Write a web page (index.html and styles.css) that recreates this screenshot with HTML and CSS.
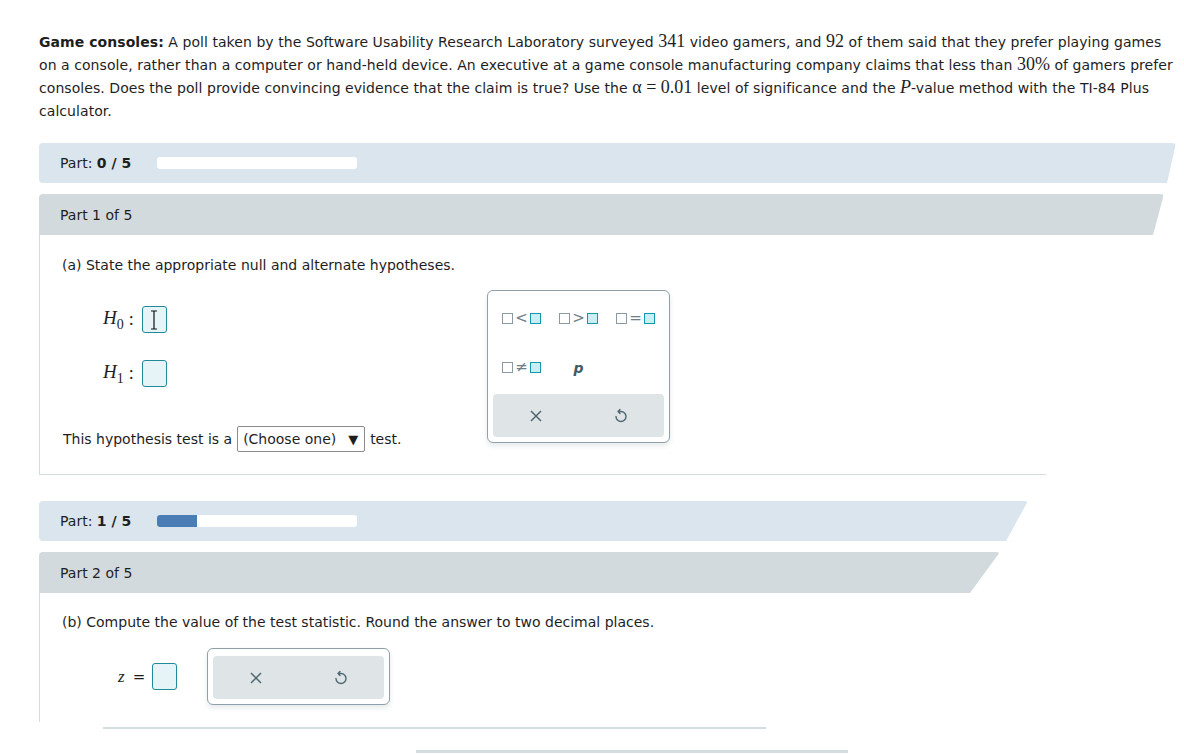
FILE: index.html
```html
<!DOCTYPE html>
<html lang="en">
  <head>
    <meta charset="UTF-8" />
    <meta name="viewport" content="width=device-width, initial-scale=1.0" />
    <title>Hypothesis test for a proportion</title>
    <link rel="stylesheet" href="styles.css">
  </head>
  <body>
    <main class="page">
      <p class="problem">
        <b>Game consoles:</b> A poll taken by the Software Usability Research Laboratory surveyed <span class="math">341</span> video gamers, and <span class="math">92</span> of them said that they prefer playing games on a console, rather than a computer or hand-held device. An executive at a game console manufacturing company claims that less than <span class="math">30%</span> of gamers prefer consoles. Does the poll provide convincing evidence that the claim is true? Use the <span class="math">α = 0.01</span> level of significance and the <span class="math"><i>P</i></span>-value method with the TI-84 Plus calculator.
      </p>

      <div class="progress progress--first">
        <span class="progress-label">Part: <b>0 / 5</b></span>
        <div class="track"><div class="fill" style="width: 0%"></div></div>
      </div>
      <div class="part-head part-head--first">Part 1 of 5</div>
      <section class="part-body part-body--a">
        <p class="question">(a) State the appropriate null and alternate hypotheses.</p>
        <div class="answer">
          <div class="answer-main">
            <div class="hyp">
              <span class="var">H<sub>0</sub></span><span class="colon">:</span>
              <span class="box">
                <svg class="ibeam" width="8" height="20" viewBox="0 0 8 20">
                  <path d="M1 1h6M1 19h6M4 1v18" stroke="#111" stroke-width="1.2" fill="none" />
                </svg>
              </span>
            </div>
            <div class="hyp">
              <span class="var">H<sub>1</sub></span><span class="colon">:</span>
              <span class="box"></span>
            </div>
            <div class="sentence">
              <span>This hypothesis test is a</span>
              <span class="select"><span>(Choose one)</span><span class="caret">▼</span></span>
              <span>test.</span>
            </div>
          </div>

          <div class="keypad">
            <div class="keys">
              <span class="key"><i class="sq"></i><span class="op">&lt;</span><i class="sq sq--on"></i></span>
              <span class="key"><i class="sq"></i><span class="op">&gt;</span><i class="sq sq--on"></i></span>
              <span class="key"><i class="sq"></i><span class="op">=</span><i class="sq sq--on"></i></span>
              <span class="key"><i class="sq"></i><span class="op">≠</span><i class="sq sq--on"></i></span>
              <span class="key key--p">p</span>
            </div>
            <div class="tools">
              <svg width="14" height="14" viewBox="0 0 14 14">
                <path d="M2 2l10 10M12 2L2 12" stroke="#4f6771" stroke-width="1.5" fill="none" />
              </svg>
              <svg width="14" height="16" viewBox="0 0 14 16">
                <path d="M6 1.5L4 3.5l2 2M4 3.5h3a5 5 0 1 1-5 5" stroke="#4f6771" stroke-width="1.4" fill="none" stroke-linecap="round" stroke-linejoin="round" />
              </svg>
            </div>
          </div>
        </div>
      </section>

      <div class="progress progress--second">
        <span class="progress-label">Part: <b>1 / 5</b></span>
        <div class="track"><div class="fill" style="width: 20%"></div></div>
      </div>
      <div class="part-head part-head--second">Part 2 of 5</div>
      <section class="part-body part-body--b">
        <p class="question">(b) Compute the value of the test statistic. Round the answer to two decimal places.</p>
        <div class="zrow">
          <span class="var var--z">z</span><span class="eq">=</span>
          <span class="box"></span>
          <div class="keypad keypad--small">
            <div class="tools">
              <svg width="14" height="14" viewBox="0 0 14 14">
                <path d="M2 2l10 10M12 2L2 12" stroke="#4f6771" stroke-width="1.5" fill="none" />
              </svg>
              <svg width="14" height="16" viewBox="0 0 14 16">
                <path d="M6 1.5L4 3.5l2 2M4 3.5h3a5 5 0 1 1-5 5" stroke="#4f6771" stroke-width="1.4" fill="none" stroke-linecap="round" stroke-linejoin="round" />
              </svg>
            </div>
          </div>
        </div>
      </section>
      <div class="rule"></div>
      <div class="rule rule--faint"></div>
    </main>
  </body>
</html>
```

FILE: styles.css
```css
:root {
  --progress-bg: #dae5ee;
  --head-bg: #d2dadd;
  --line: #d3dcdf;
  --teal: #1f8b99;
  --slate: #4f6771;
}

* {
  margin: 0;
  padding: 0;
  box-sizing: border-box;
}

body {
  background: #fff;
  font-family: 'DejaVu Sans', Verdana, sans-serif;
  font-size: 14px;
  color: #1e1e1e;
  overflow: hidden;
}

.page {
  padding: 31px 0 0 39px;
}

.problem {
  width: 1135px;
  line-height: 23px;
  letter-spacing: 0.06px;
}

.math {
  font-family: 'Liberation Serif', 'DejaVu Serif', serif;
  font-size: 18px;
  line-height: 1;
  letter-spacing: 0;
}

/* part progress bars */
.progress {
  display: flex;
  align-items: center;
  height: 40px;
  padding-left: 21px;
  background: var(--progress-bg);
  border-radius: 4px;
}

.progress-label {
  width: 97px;
}

.progress--first {
  margin-top: 20px;
  width: 1137px;
  clip-path: polygon(0 0, 100% 0, calc(100% - 9px) 100%, 0 100%);
}

.progress--second {
  margin-top: 26px;
  width: 989px;
  clip-path: polygon(0 0, 100% 0, calc(100% - 22px) 100%, 0 100%);
}

.track {
  width: 200px;
  height: 12px;
  background: #fff;
  border-radius: 3px;
  overflow: hidden;
}

.fill {
  height: 100%;
  background: #4a7db5;
}

.part-head {
  display: flex;
  align-items: center;
  margin-top: 11px;
  height: 41px;
  padding-left: 21px;
  background: var(--head-bg);
  border-radius: 4px 4px 0 0;
}

.part-head--first {
  width: 1125px;
  clip-path: polygon(0 0, 100% 0, calc(100% - 11px) 100%, 0 100%);
}

.part-head--second {
  width: 961px;
  clip-path: polygon(0 0, 100% 0, calc(100% - 30px) 100%, 0 100%);
}

.part-body {
  border-left: 1px solid var(--line);
  padding: 20px 0 0 22px;
}

.part-body--a {
  width: 1007px;
  padding-bottom: 22px;
  border-bottom: 1px solid var(--line);
}

.part-body--b {
  height: 129px;
  padding-top: 19px;
}

.question {
  line-height: 20px;
}

/* answer area */
.answer {
  display: flex;
  align-items: flex-start;
  margin-top: 15px;
}

.answer-main {
  width: 425px;
  padding-top: 16px;
}

.hyp {
  display: flex;
  align-items: center;
  height: 27px;
  padding-left: 41px;
}

.hyp + .hyp {
  margin-top: 27px;
}

.var {
  font-family: 'Liberation Serif', 'DejaVu Serif', serif;
  font-style: italic;
  font-size: 19px;
  line-height: 1;
}

.var sub {
  font-style: normal;
  font-size: 14px;
}

.var--z {
  font-size: 17px;
}

.colon {
  margin: 0 8px 0 5px;
  font-family: 'Liberation Serif', serif;
  font-size: 18px;
}

.box {
  display: flex;
  align-items: center;
  justify-content: center;
  width: 25px;
  height: 27px;
  background: #e6f4f8;
  border: 1px solid var(--teal);
  border-radius: 3px;
}

.sentence {
  display: flex;
  align-items: center;
  gap: 5px;
  margin-top: 39px;
  padding-left: 1px;
}

.select {
  display: flex;
  align-items: center;
  justify-content: space-between;
  width: 128px;
  height: 26px;
  padding: 0 6px 0 5px;
  border: 1px solid #8c8c8c;
  border-radius: 2px;
}

.caret {
  font-size: 13px;
}

/* keypad */
.keypad {
  width: 183px;
  padding: 3px 5px 5px;
  background: #fff;
  border: 1px solid #8fa0a8;
  border-radius: 6px;
  box-shadow: 0 3px 5px rgba(60, 80, 90, 0.12);
}

.keys {
  display: grid;
  grid-template-columns: repeat(3, 1fr);
  grid-auto-rows: 49px;
}

.key {
  display: flex;
  align-items: center;
  justify-content: center;
  gap: 2px;
}

.sq {
  display: block;
  width: 11px;
  height: 11px;
  border: 1.5px solid #8a9aa2;
}

.sq--on {
  background: #c9eef4;
  border-color: #1797ae;
}

.op {
  color: #6d8089;
  font-size: 15px;
  line-height: 11px;
}

.key--p {
  font-family: 'DejaVu Sans', sans-serif;
  font-weight: bold;
  font-style: italic;
  font-size: 14px;
  color: #3f5b66;
}

.tools {
  display: grid;
  grid-template-columns: 1fr 1fr;
  align-items: center;
  justify-items: center;
  height: 43px;
  margin-top: 2px;
  background: #dfe5e7;
  border-radius: 4px;
}

.keypad--small {
  margin-left: 30px;
  padding: 5px;
}

.zrow {
  display: flex;
  align-items: center;
  margin-top: 16px;
  padding-left: 56px;
}

.eq {
  margin: 0 7px 0 8px;
  font-size: 15px;
}

.rule {
  margin: 5px 0 0 64px;
  width: 663px;
  height: 2px;
  background: var(--line);
}

.rule--faint {
  margin: 21px 0 0 377px;
  width: 432px;
  height: 3px;
}
```
